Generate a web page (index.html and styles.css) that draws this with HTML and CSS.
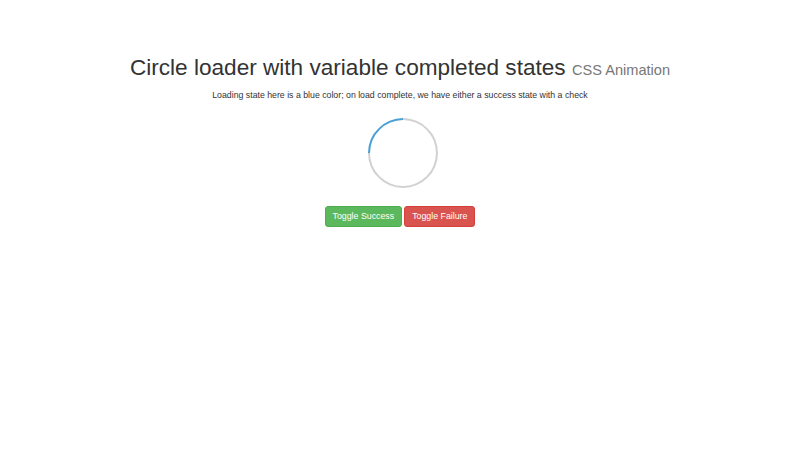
FILE: index.html
```html
<!DOCTYPE html>
<html lang="en">
<head>
    <meta charset="UTF-8">
    <meta name="viewport" content="width=device-width, initial-scale=1.0">
    <title>Circle loader with variable completed states</title>
    <link rel="stylesheet" href="styles.css">
</head>
<body>
    <div class="container">
        <h1>Circle loader with variable completed states <small>CSS Animation</small></h1>
        <p class="lead">Loading state here is a blue color; on load complete, we have either a success state with a check</p>
        <div class="circle-loader"></div>
        <div class="actions">
            <button class="btn btn-success" type="button">Toggle Success</button>
            <button class="btn btn-danger" type="button">Toggle Failure</button>
        </div>
    </div>
</body>
</html>
```

FILE: styles.css
```css
/* General styling */
body {
    font-family: "Liberation Sans", Arial, sans-serif;
    margin: 0;
    padding: 0;
    background: #fff;
    color: #333;
}
.container {
    display: flex;
    flex-direction: column;
    align-items: center;
    padding-top: 56px;
    text-align: center;
}
h1 {
    font-size: 22.6px;
    font-weight: normal;
    line-height: 1.1;
    margin: 0;
}
h1 small {
    font-size: 14.6px;
    color: #777;
}
.lead {
    font-size: 8.75px;
    line-height: 10px;
    margin: 9px 0 18px;
}
/* Spinner, caught mid-turn */
.circle-loader {
    width: 66px;
    height: 66px;
    margin-left: 6px;
    border: 2px solid rgba(0, 0, 0, 0.18);
    border-left-color: #4a9fd5;
    border-radius: 50%;
    transform: rotate(45deg);
}
.actions {
    display: flex;
    gap: 2px;
    margin-top: 18px;
}
.btn {
    font-family: inherit;
    font-size: 8.8px;
    color: #fff;
    padding: 0 7px;
    border: 1px solid transparent;
    border-radius: 3px;
    line-height: 1;
    height: 21px;
}
.btn-success {
    background: #5cb85c;
    border-color: #4cae4c;
}
.btn-danger {
    background: #d9534f;
    border-color: #d43f3a;
}
```
